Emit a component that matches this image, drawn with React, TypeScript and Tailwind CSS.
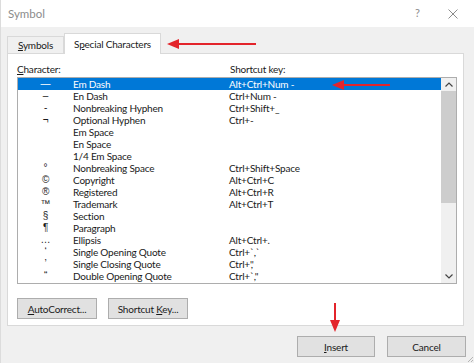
import React from "react";

type Row = { sym: string; name: string; key: string };

const ROWS: Row[] = [
  { sym: "—", name: "Em Dash", key: "Alt+Ctrl+Num -" },
  { sym: "–", name: "En Dash", key: "Ctrl+Num -" },
  { sym: "-", name: "Nonbreaking Hyphen", key: "Ctrl+Shift+_" },
  { sym: "¬", name: "Optional Hyphen", key: "Ctrl+-" },
  { sym: "", name: "Em Space", key: "" },
  { sym: "", name: "En Space", key: "" },
  { sym: "", name: "1/4 Em Space", key: "" },
  { sym: "°", name: "Nonbreaking Space", key: "Ctrl+Shift+Space" },
  { sym: "©", name: "Copyright", key: "Alt+Ctrl+C" },
  { sym: "®", name: "Registered", key: "Alt+Ctrl+R" },
  { sym: "™", name: "Trademark", key: "Alt+Ctrl+T" },
  { sym: "§", name: "Section", key: "" },
  { sym: "¶", name: "Paragraph", key: "" },
  { sym: "…", name: "Ellipsis", key: "Alt+Ctrl+." },
  { sym: "‘", name: "Single Opening Quote", key: "Ctrl+`,`" },
  { sym: "’", name: "Single Closing Quote", key: "Ctrl+','" },
  { sym: "“", name: "Double Opening Quote", key: "Ctrl+`,\"" },
];

function Btn({ children, className = "" }: { children: React.ReactNode; className?: string }) {
  return (
    <div
      className={`flex items-center justify-center h-[21px] border border-[#adadad] bg-[#e1e1e1] text-[10px] leading-[12px] tracking-[-0.2px] text-[#1a1a1a] ${className}`}
    >
      {children}
    </div>
  );
}

function RedArrows() {
  return (
    <svg className="absolute inset-0 pointer-events-none" width={474} height={363}>
      <g fill="#e3242b" stroke="#e3242b">
        <line x1={175} y1={44} x2={255} y2={44} strokeWidth={2} />
        <polygon points="166,44 178,39 178,49" stroke="none" />
        <line x1={340} y1={85} x2={389} y2={85} strokeWidth={2} />
        <polygon points="331,85 343,80 343,90" stroke="none" />
        <line x1={334} y1={303} x2={334} y2={322} strokeWidth={2} />
        <polygon points="334,332 329,320 339,320" stroke="none" />
      </g>
    </svg>
  );
}

export default function App() {
  return (
    <div
      className="relative w-[474px] h-[363px] bg-[#f0f0f0] overflow-hidden border-l border-[#dcdcdc]"
      style={{ fontFamily: 'Lato, "Noto Sans", sans-serif' }}
    >
      {/* title bar */}
      <div className="h-[27px] bg-white flex items-center justify-between pl-[7px] pr-[16px] text-[11.5px] text-[#8c8c8c]">
        <span>Symbol</span>
        <div className="flex items-center gap-[28px]">
          <span className="text-[11px]">?</span>
          <svg width={10} height={10} viewBox="0 0 10 10">
            <path d="M0.5 0.5 L9.5 9.5 M9.5 0.5 L0.5 9.5" stroke="#8c8c8c" strokeWidth={1} />
          </svg>
        </div>
      </div>

      <div className="pl-[6px] pr-[10px]">
        {/* tabs */}
        <div className="flex items-end h-[26px] relative z-10 tracking-[-0.2px]">
          <div className="w-[57px] h-[17px] border border-b-0 border-[#d9d9d9] flex items-center justify-center text-[10px] leading-[12px] text-[#1a1a1a]">
            <span>
              <u>S</u>ymbols
            </span>
          </div>
          <div className="w-[97px] h-[21px] -mb-px bg-white border border-b-0 border-[#d9d9d9] flex items-center justify-center text-[10px] leading-[12px] text-[#1a1a1a]">
            <span>
              S<u>p</u>ecial Characters
            </span>
          </div>
        </div>

        {/* panel */}
        <div className="h-[273px] bg-white border border-[#d9d9d9] pl-[9px] pt-[7px] tracking-[-0.2px]">
          <div className="flex text-[10px] leading-[12px] text-[#1a1a1a] h-[16px] items-center">
            <span className="w-[213px]">
              <u>C</u>haracter:
            </span>
            <span>Shortcut key:</span>
          </div>

          <div className="w-[440px] h-[207px] border border-[#adadad] flex">
            <div className="flex-1 flex flex-col">
              {ROWS.map((r, i) => (
                <div
                  key={r.name}
                  className={`flex items-center h-[12px] text-[10px] leading-[12px] ${
                    i === 0 ? "bg-[#0078d7] text-white" : "text-[#1a1a1a]"
                  }`}
                >
                  <span className="w-[55px] text-center font-['Liberation_Sans',sans-serif]">{r.sym}</span>
                  <span className="w-[156px] whitespace-nowrap">{r.name}</span>
                  <span className="whitespace-nowrap">{r.key}</span>
                </div>
              ))}
            </div>
            <div className="w-[15px] bg-[#f0f0f0] flex flex-col">
              <div className="h-[13px] flex items-center justify-center">
                <svg width={8} height={5} viewBox="0 0 8 5">
                  <path d="M0.5 4.5 L4 1 L7.5 4.5" fill="none" stroke="#444" strokeWidth={1.2} />
                </svg>
              </div>
              <div className="h-[112px] bg-[#cdcdcd]" />
              <div className="flex-1" />
              <div className="h-[13px] flex items-center justify-center">
                <svg width={8} height={5} viewBox="0 0 8 5">
                  <path d="M0.5 0.5 L4 4 L7.5 0.5" fill="none" stroke="#444" strokeWidth={1.2} />
                </svg>
              </div>
            </div>
          </div>

          <div className="flex gap-[11px] mt-[14px]">
            <Btn className="w-[80px]">
              <span>
                <u>A</u>utoCorrect...
              </span>
            </Btn>
            <Btn className="w-[80px]">
              <span>
                Shortcut <u>K</u>ey...
              </span>
            </Btn>
          </div>
        </div>

        {/* bottom buttons */}
        <div className="flex justify-end gap-[12px] mt-[10px] -mr-[2px]">
          <Btn className="w-[78px] h-[20px] border-[#0078d7]">
            <span>
              <u>I</u>nsert
            </span>
          </Btn>
          <Btn className="w-[79px] h-[20px]">Cancel</Btn>
        </div>
      </div>

      {/* resize grip */}
      <svg className="absolute right-0 bottom-0" width={8} height={8} viewBox="0 0 8 8">
        <path d="M7 2 L2 7 M7 5 L5 7" stroke="#b5b5b5" strokeWidth={1} />
      </svg>

      <RedArrows />
    </div>
  );
}
